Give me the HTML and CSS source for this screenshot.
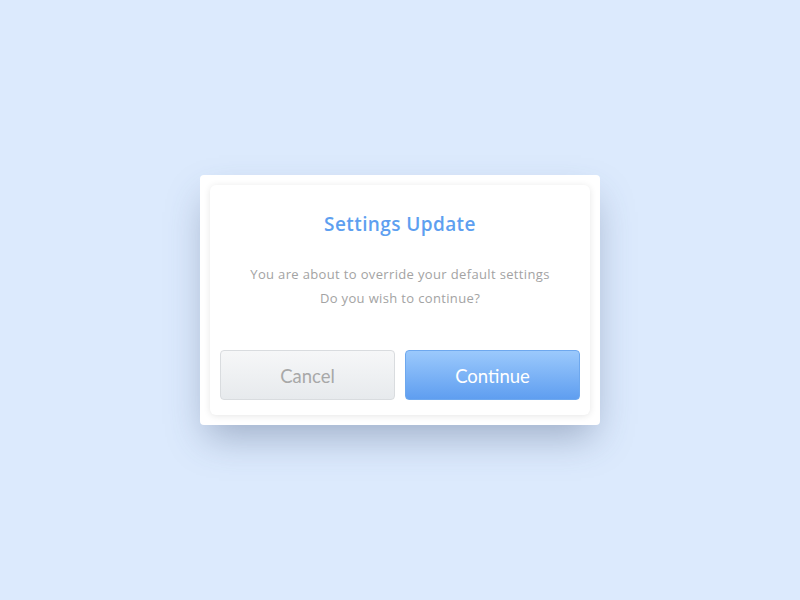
FILE: index.html
```html
<!DOCTYPE html>
<html lang="en">
<head>
<meta charset="utf-8">
<title>Settings Update</title>
<link rel="stylesheet" href="styles.css">
</head>
<body>
  <main class="stage">
    <div class="dialog">
      <div class="card">
        <h1 class="title">Settings Update</h1>
        <p class="message">You are about to override your default settings<br>Do you wish to continue?</p>
        <div class="actions">
          <button class="btn btn-cancel" type="button">Cancel</button>
          <button class="btn btn-continue" type="button">Continue</button>
        </div>
      </div>
    </div>
  </main>
</body>
</html>
```
FILE: styles.css
```css
html, body {
  margin: 0;
  padding: 0;
  height: 100%;
}

body {
  background: #dceafd;
  font-family: "Open Sans", Lato, "Liberation Sans", sans-serif;
}

.stage {
  height: 600px;
  display: flex;
  align-items: center;
  justify-content: center;
}

.dialog {
  width: 380px;
  padding: 10px;
  background: #ffffff;
  border-radius: 4px;
  box-shadow: 0 18px 36px -6px rgba(60, 80, 115, 0.38);
}

.card {
  background: #ffffff;
  border-radius: 6px;
  padding: 0 10px 15px;
  box-shadow: 0 1px 7px rgba(0, 0, 0, 0.1);
}

.title {
  margin: 0;
  padding-top: 27px;
  font-size: 19px;
  line-height: 24px;
  font-weight: 600;
  letter-spacing: 0.4px;
  color: #5e9ff0;
  text-align: center;
}

.message {
  margin: 26px 0 0;
  font-size: 13px;
  line-height: 24px;
  letter-spacing: 0.35px;
  color: #a3a3a3;
  text-align: center;
}

.actions {
  margin-top: 40px;
  display: flex;
  gap: 10px;
}

.btn {
  flex: 1;
  height: 50px;
  padding-top: 2px;
  border-radius: 4px;
  font-family: Lato, "Open Sans", sans-serif;
  font-size: 18.5px;
  cursor: pointer;
}

.btn-cancel {
  border: 1px solid #d9dcdf;
  background: linear-gradient(#f6f7f8, #e7eaed);
  color: #a8a8a8;
}

.btn-continue {
  border: 1px solid #6ea8ee;
  background: linear-gradient(#9bc9fc, #5f9ef0);
  color: #ffffff;
}
```
